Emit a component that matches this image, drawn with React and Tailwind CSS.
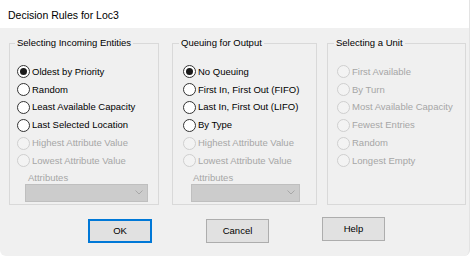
import React from "react";

const FONT = { fontFamily: '"Liberation Sans", Arial, sans-serif' };

function Radio({ label, checked, disabled }) {
  return (
    <div className="flex items-center h-[17.8px]">
      <span
        className={
          disabled
            ? "w-[13px] h-[13px] rounded-full border border-[#cfcfcf] bg-[#f3f3f3] flex items-center justify-center shrink-0"
            : "w-[13px] h-[13px] rounded-full border border-[#333333] bg-white flex items-center justify-center shrink-0"
        }
      >
        {checked && <span className="w-[7px] h-[7px] rounded-full bg-[#1a1a1a]" />}
      </span>
      <span
        className={
          disabled
            ? "ml-[2px] text-[9.5px] leading-[12px] text-[#a6a6a6] whitespace-nowrap"
            : "ml-[2px] text-[9.5px] leading-[12px] text-black whitespace-nowrap"
        }
      >
        {label}
      </span>
    </div>
  );
}

function Combo({ width, labelMl }) {
  return (
    <div className="flex flex-col">
      <div className={labelMl}>
        <div className="h-[12px] text-[9.5px] leading-[12px] text-[#a6a6a6]">Attributes</div>
      </div>
      <div className={width}>
        <div className="h-[18px] bg-[#cccccc] border border-[#bfbfbf] flex items-center justify-end pr-[4px]">
          <svg width="8" height="5" viewBox="0 0 8 5">
            <path d="M0.5 0.5 L4 4 L7.5 0.5" fill="none" stroke="#a8a8a8" strokeWidth="1" />
          </svg>
        </div>
      </div>
    </div>
  );
}

export default function App() {
  return (
    <div className="w-[474px] h-[257px] bg-white" style={FONT}>
      <div className="w-[470px] h-[256px] bg-[#f0f0f0] rounded-b-[6px] flex flex-col border-r border-[#e3e3e3]">
        <div className="h-[28px] bg-white flex items-center pl-[8px] pt-[2px]">
          <span className="text-[10.5px] leading-[12px] text-black">Decision Rules for Loc3</span>
        </div>
        <div className="flex pt-[9px]">
          <fieldset className="ml-[9px] w-[150px] border border-[#d9d9d9] pl-[7px] pb-[2px]">
            <legend className="ml-[-2px] px-[2px] text-[9.5px] leading-[12px] text-black">
              Selecting Incoming Entities
            </legend>
            <div className="pt-[14px] flex flex-col">
              <Radio label="Oldest by Priority" checked />
              <Radio label="Random" />
              <Radio label="Least Available Capacity" />
              <Radio label="Last Selected Location" />
              <Radio label="Highest Attribute Value" disabled />
              <Radio label="Lowest Attribute Value" disabled />
            </div>
            <div className="mt-[2px]">
              <Combo width="ml-[8px] w-[123px]" labelMl="ml-[11px]" />
            </div>
          </fieldset>
          <fieldset className="ml-[13px] w-[145px] border border-[#d9d9d9] pl-[10px] pb-[2px]">
            <legend className="ml-[-4px] px-[2px] text-[9.5px] leading-[12px] text-black">
              Queuing for Output
            </legend>
            <div className="pt-[14px] flex flex-col">
              <Radio label="No Queuing" checked />
              <Radio label="First In, First Out (FIFO)" />
              <Radio label="Last In, First Out (LIFO)" />
              <Radio label="By Type" />
              <Radio label="Highest Attribute Value" disabled />
              <Radio label="Lowest Attribute Value" disabled />
            </div>
            <div className="mt-[2px]">
              <Combo width="ml-[8px] w-[109px]" labelMl="ml-[10px]" />
            </div>
          </fieldset>
          <fieldset className="ml-[10px] w-[139px] border border-[#d9d9d9] pl-[9px] pb-[2px]">
            <legend className="ml-[-3px] px-[2px] text-[9.5px] leading-[12px] text-black">
              Selecting a Unit
            </legend>
            <div className="pt-[14px] flex flex-col">
              <Radio label="First Available" disabled />
              <Radio label="By Turn" disabled />
              <Radio label="Most Available Capacity" disabled />
              <Radio label="Fewest Entries" disabled />
              <Radio label="Random" disabled />
              <Radio label="Longest Empty" disabled />
            </div>
          </fieldset>
        </div>
        <div className="flex items-start mt-[14px]">
          <button className="ml-[88px] w-[64px] h-[24px] bg-[#e1e1e1] border-2 border-[#0078d7] text-[9.5px] text-black">
            OK
          </button>
          <button className="ml-[54px] w-[63px] h-[24px] bg-[#e1e1e1] border border-[#adadad] text-[9.5px] text-black">
            Cancel
          </button>
          <button className="ml-[53px] mt-[-2px] w-[63px] h-[24px] bg-[#e1e1e1] border border-[#adadad] text-[9.5px] text-black">
            Help
          </button>
        </div>
      </div>
    </div>
  );
}
